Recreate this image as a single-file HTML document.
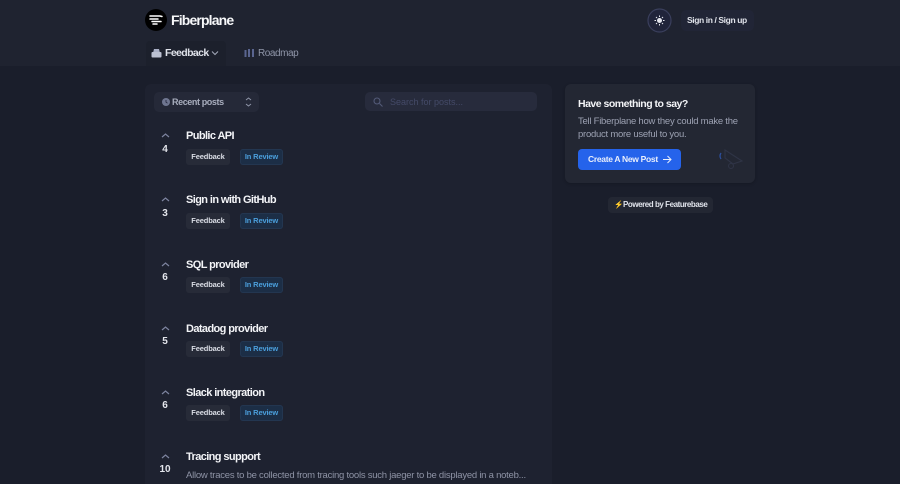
<!DOCTYPE html>
<html><head><meta charset="utf-8">
<style>
html,body{margin:0;padding:0;width:900px;height:484px;overflow:hidden;background:#1a1e2b;font-family:"Liberation Sans",sans-serif;color:#fff}
#w{position:absolute;left:0;top:0;width:900px;height:484px;overflow:hidden}
.a{position:absolute;white-space:nowrap}
#hdr{left:0;top:0;width:900px;height:66px;background:#1f2330}
#card{left:145px;top:84px;width:407px;height:400px;background:#1e2230;border-radius:6px 6px 0 0}
#side{left:565px;top:84px;width:190px;height:99px;background:#232733;border-radius:6px;box-shadow:0 1px 3px rgba(0,0,0,.2)}
.t{left:186px;font-size:11px;letter-spacing:-.6px;font-weight:700;color:#f3f4f7;line-height:14px}
.n{left:155px;width:20px;text-align:center;font-size:10px;font-weight:700;color:#e4e6ec;line-height:12px}
.tag{height:16px;line-height:16px;font-size:7.500px;letter-spacing:-.15px;font-weight:700;border-radius:3px;text-align:center}
.f{left:186px;width:44px;background:#272b38;color:#d9dce4}
.r{left:240px;width:43px;background:#1c2e46;color:#4b9fdc;box-shadow:inset 0 0 0 1px #233650}
svg{position:absolute;overflow:visible}
</style></head><body><div id="w">
<div class="a" id="hdr"></div>
<svg style="left:145px;top:9px" width="22" height="22" viewBox="0 0 22 22"><circle cx="11" cy="11" r="11" fill="#000"/><path d="M5 7h10l2 .5M5 10h8M7 12.500h9M8 15h4" stroke="#fff" stroke-width="1.500" stroke-linecap="round" fill="none"/></svg>
<div class="a" style="left:171px;top:11px;font-size:14px;letter-spacing:-.85px;font-weight:700;line-height:18px;color:#f6f7f9">Fiberplane</div>
<div class="a" style="left:146px;top:41px;width:80px;height:25px;background:#1c202c;border-radius:4px 4px 0 0"></div>
<svg style="left:151px;top:48px" width="11" height="11" viewBox="0 0 11 11"><path d="M3 1h5l1 4H2z" fill="#aab0c6"/><rect x="0.5" y="4" width="10" height="5.500" rx="1" fill="#bcc1d2"/></svg>
<div class="a" style="left:165px;top:47px;font-size:10.500px;letter-spacing:-.6px;font-weight:700;color:#dfe2ea;line-height:13px">Feedback</div>
<svg style="left:211px;top:50px" width="8" height="6" viewBox="0 0 8 6"><path d="M1 1.500l3 3 3-3" fill="none" stroke="#a5aabb" stroke-width="1"/></svg>
<svg style="left:244px;top:48px" width="11" height="10" viewBox="0 0 11 10"><path d="M1.500 9V2M5 9V1M9 9V1" stroke="#5a6590" stroke-width="2"/></svg>
<div class="a" style="left:258px;top:47px;font-size:10px;letter-spacing:-.45px;color:#8f95a8;line-height:13px">Roadmap</div>
<svg style="left:647px;top:8px" width="25" height="25" viewBox="0 0 25 25"><circle cx="12.500" cy="12.500" r="11.500" fill="#20243a" stroke="#3a3f5c" stroke-width="1.200"/><circle cx="12.500" cy="12.500" r="2.500" fill="#e4e6ee"/><path d="M12.500 7.500v1.500M12.500 16v1.500M7.500 12.500h1.500M16 12.500h1.500M9 9l1 1M15 15l1 1M16 9l-1 1M10 15l-1 1" stroke="#e4e6ee" stroke-width="1"/></svg>
<div class="a" style="left:681px;top:10px;width:73px;height:21px;background:#212536;border-radius:5px"></div>
<div class="a" style="left:687px;top:14px;font-size:8.500px;letter-spacing:-.4px;font-weight:700;color:#e0e3ea;line-height:12px">Sign in / Sign up</div>
<div class="a" id="card"></div>
<div class="a" style="left:154px;top:92px;width:105px;height:20px;background:#252938;border-radius:5px"></div>
<svg style="left:162px;top:98px" width="8" height="8" viewBox="0 0 8 8"><circle cx="4" cy="4" r="4" fill="#6f7690"/><path d="M4 2v2.200l1.500 1" stroke="#20243a" stroke-width=".8" fill="none"/></svg>
<div class="a" style="left:172px;top:96px;font-size:9px;letter-spacing:-.4px;color:#a9aebe;font-weight:700;line-height:12px">Recent posts</div>
<svg style="left:245px;top:97px" width="7" height="10" viewBox="0 0 7 10"><path d="M1 3l2.500-2L6 3M1 7l2.500 2L6 7" fill="none" stroke="#8f95a8" stroke-width="1"/></svg>
<div class="a" style="left:365px;top:92px;width:172px;height:19px;background:#272b3c;border-radius:5px"></div>
<svg style="left:373px;top:97px" width="10" height="10" viewBox="0 0 10 10"><circle cx="4" cy="4" r="3" fill="none" stroke="#535a78" stroke-width="1.100"/><path d="M6.500 6.500L9.500 9.500" stroke="#535a78" stroke-width="1.100"/></svg>
<div class="a" style="left:390px;top:96px;font-size:9px;color:#444a68;line-height:12px">Search for posts...</div>

<svg style="left:161px;top:133px" width="9" height="5" viewBox="0 0 9 5"><path d="M1 4l3.500-3L8 4" fill="none" stroke="#7d84a0" stroke-width="1.200"/></svg>
<div class="a n" style="top:144px">4</div>
<div class="a t" style="top:129px">Public API</div>
<div class="a tag f" style="top:149px">Feedback</div><div class="a tag r" style="top:149px">In Review</div>

<svg style="left:161px;top:197px" width="9" height="5" viewBox="0 0 9 5"><path d="M1 4l3.500-3L8 4" fill="none" stroke="#7d84a0" stroke-width="1.200"/></svg>
<div class="a n" style="top:208px">3</div>
<div class="a t" style="top:193px">Sign in with GitHub</div>
<div class="a tag f" style="top:213px">Feedback</div><div class="a tag r" style="top:213px">In Review</div>

<svg style="left:161px;top:262px" width="9" height="5" viewBox="0 0 9 5"><path d="M1 4l3.500-3L8 4" fill="none" stroke="#7d84a0" stroke-width="1.200"/></svg>
<div class="a n" style="top:272px">6</div>
<div class="a t" style="top:258px">SQL provider</div>
<div class="a tag f" style="top:277px">Feedback</div><div class="a tag r" style="top:277px">In Review</div>

<svg style="left:161px;top:326px" width="9" height="5" viewBox="0 0 9 5"><path d="M1 4l3.500-3L8 4" fill="none" stroke="#7d84a0" stroke-width="1.200"/></svg>
<div class="a n" style="top:336px">5</div>
<div class="a t" style="top:322px">Datadog provider</div>
<div class="a tag f" style="top:341px">Feedback</div><div class="a tag r" style="top:341px">In Review</div>

<svg style="left:161px;top:390px" width="9" height="5" viewBox="0 0 9 5"><path d="M1 4l3.500-3L8 4" fill="none" stroke="#7d84a0" stroke-width="1.200"/></svg>
<div class="a n" style="top:400px">6</div>
<div class="a t" style="top:386px">Slack integration</div>
<div class="a tag f" style="top:405px">Feedback</div><div class="a tag r" style="top:405px">In Review</div>

<svg style="left:161px;top:454px" width="9" height="5" viewBox="0 0 9 5"><path d="M1 4l3.500-3L8 4" fill="none" stroke="#7d84a0" stroke-width="1.200"/></svg>
<div class="a n" style="top:464px">10</div>
<div class="a t" style="top:450px">Tracing support</div>
<div class="a" style="left:186px;top:469px;font-size:9.500px;letter-spacing:-.24px;color:#8e93a5;line-height:13px">Allow traces to be collected from tracing tools such jaeger to be displayed in a noteb...</div>

<div class="a" id="side"></div>
<div class="a" style="left:578px;top:97px;font-size:10.500px;letter-spacing:-.5px;font-weight:700;color:#f3f4f7;line-height:14px">Have something to say?</div>
<div class="a" style="left:578px;top:116px;font-size:9.500px;letter-spacing:-.25px;color:#9ca1b2;line-height:12.500px">Tell Fiberplane how they could make the<br>product more useful to you.</div>
<div class="a" style="left:578px;top:149px;width:103px;height:21px;background:#2563eb;border-radius:4px"></div>
<div class="a" style="left:588px;top:153px;font-size:8.500px;letter-spacing:-.3px;font-weight:700;color:#e8eefc;line-height:12px">Create A New Post</div>
<svg style="left:662px;top:155px" width="10" height="9" viewBox="0 0 10 9"><path d="M1 4.500h8M5.500 1l3.500 3.500L5.500 8" fill="none" stroke="#e8eefc" stroke-width="1"/></svg>
<svg style="left:716px;top:147px" width="28" height="24" viewBox="0 0 28 24"><path d="M9 3l17 11-9 3-8-6z" fill="none" stroke="#2f3446" stroke-width="1.100"/><path d="M5 6q-2 3 0 6" fill="none" stroke="#2d4f9c" stroke-width="1.300"/><circle cx="15" cy="19" r="2.500" fill="none" stroke="#2f3446"/></svg>
<div class="a" style="left:608px;top:197px;width:105px;height:16px;background:#232733;border-radius:4px"></div>
<div class="a" style="left:614px;top:199px;font-size:7.500px;line-height:12px;color:#f0c040">⚡</div>
<div class="a" style="left:623px;top:199px;font-size:8px;letter-spacing:-.45px;font-weight:700;color:#dfe2ea;line-height:12px">Powered by Featurebase</div>
</div></body></html>
